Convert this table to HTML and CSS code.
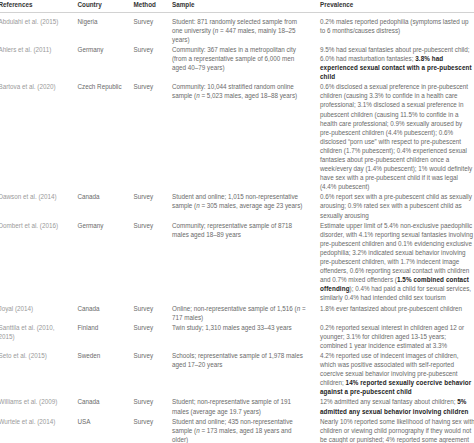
FILE: index.html
```html
<!DOCTYPE html>
<html lang="en">
<head>
<meta charset="utf-8">
<title>Prevalence table</title>
<link rel="stylesheet" href="styles.css">
</head>
<body>
<table class="data">
  <colgroup>
    <col class="c-ref"><col class="c-country"><col class="c-method"><col class="c-sample"><col class="c-prev">
  </colgroup>
  <thead>
    <tr><th>References</th><th>Country</th><th>Method</th><th>Sample</th><th>Prevalence</th></tr>
  </thead>
  <tbody>
    <tr>
      <td class="ref">Abdulahi et al. (2015)</td><td>Nigeria</td><td>Survey</td>
      <td>Student: 871 randomly selected sample from<br>one university (<i>n</i> = 447 males, mainly 18–25<br>years)</td>
      <td>0.2% males reported pedophilia (symptoms lasted up<br>to 6 months/causes distress)</td>
    </tr>
    <tr>
      <td class="ref">Ahlers et al. (2011)</td><td>Germany</td><td>Survey</td>
      <td>Community: 367 males in a metropolitan city<br>(from a representative sample of 6,000 men<br>aged 40–79 years)</td>
      <td>9.5% had sexual fantasies about pre-pubescent child;<br>6.0% had masturbation fantasies; <b>3.8% had</b><br><b>experienced sexual contact with a pre-pubescent</b><br><b>child</b></td>
    </tr>
    <tr>
      <td class="ref">Bartova et al. (2020)</td><td>Czech Republic</td><td>Survey</td>
      <td>Community: 10,044 stratified random online<br>sample (<i>n</i> = 5,023 males, aged 18–88 years)</td>
      <td>0.6% disclosed a sexual preference in pre-pubescent<br>children (causing 3.3% to confide in a health care<br>professional; 3.1% disclosed a sexual preference in<br>pubescent children (causing 11.5% to confide in a<br>health care professional; 0.9% sexually aroused by<br>pre-pubescent children (4.4% pubescent); 0.6%<br>disclosed “porn use” with respect to pre-pubescent<br>children (1.7% pubescent); 0.4% experienced sexual<br>fantasies about pre-pubescent children once a<br>week/every day (1.4% pubescent); 1% would definitely<br>have sex with a pre-pubescent child if it was legal<br>(4.4% pubescent)</td>
    </tr>
    <tr>
      <td class="ref">Dawson et al. (2014)</td><td>Canada</td><td>Survey</td>
      <td>Student and online; 1,015 non-representative<br>sample (<i>n</i> = 305 males, average age 23 years)</td>
      <td>0.6% report sex with a pre-pubescent child as sexually<br>arousing; 0.9% rated sex with a pubescent child as<br>sexually arousing</td>
    </tr>
    <tr>
      <td class="ref">Dombert et al. (2016)</td><td>Germany</td><td>Survey</td>
      <td>Community; representative sample of 8718<br>males aged 18–89 years</td>
      <td>Estimate upper limit of 5.4% non-exclusive paedophilic<br>disorder, with 4.1% reporting sexual fantasies involving<br>pre-pubescent children and 0.1% evidencing exclusive<br>pedophilia; 3.2% indicated sexual behavior involving<br>pre-pubescent children, with 1.7% indecent image<br>offenders, 0.6% reporting sexual contact with children<br>and 0.7% mixed offenders (<b>1.5% combined contact</b><br><b>offending</b>); 0.4% had paid a child for sexual services,<br>similarly 0.4% had intended child sex tourism</td>
    </tr>
    <tr>
      <td class="ref">Joyal (2014)</td><td>Canada</td><td>Survey</td>
      <td>Online; non-representative sample of 1,516 (<i>n</i> =<br>717 males)</td>
      <td>1.8% ever fantasized about pre-pubescent children</td>
    </tr>
    <tr>
      <td class="ref">Santtila et al. (2010,<br>2015)</td><td>Finland</td><td>Survey</td>
      <td>Twin study; 1,310 males aged 33–43 years</td>
      <td>0.2% reported sexual interest in children aged 12 or<br>younger; 3.1% for children aged 13-15 years;<br>combined 1 year incidence estimated at 3.3%</td>
    </tr>
    <tr>
      <td class="ref">Seto et al. (2015)</td><td>Sweden</td><td>Survey</td>
      <td>Schools; representative sample of 1,978 males<br>aged 17–20 years</td>
      <td>4.2% reported use of indecent images of children,<br>which was positive associated with self-reported<br>coercive sexual behavior involving pre-pubescent<br>children; <b>14% reported sexually coercive behavior</b><br><b>against a pre-pubescent child</b></td>
    </tr>
    <tr>
      <td class="ref">Williams et al. (2009)</td><td>Canada</td><td>Survey</td>
      <td>Student; non-representative sample of 191<br>males (average age 19.7 years)</td>
      <td>12% admitted any sexual fantasy about children; <b>5%</b><br><b>admitted any sexual behavior involving children</b></td>
    </tr>
    <tr>
      <td class="ref">Wurtele et al. (2014)</td><td>USA</td><td>Survey</td>
      <td>Student and online; 435 non-representative<br>sample (<i>n</i> = 173 males, aged 18 years and<br>older)</td>
      <td>Nearly 10% reported some likelihood of having sex with<br>children or viewing child pornography if they would not<br>be caught or punished; 4% reported some agreement</td>
    </tr>
  </tbody>
</table>
</body>
</html>
```

FILE: styles.css
```css
html, body {
  margin: 0;
  padding: 0;
  background: #ffffff;
  overflow: hidden;
}

body {
  width: 474px;
  height: 443px;
  font-family: "Liberation Sans", Arial, sans-serif;
  font-size: 6.3px;
  line-height: 9.1px;
  color: #6a6a6a;
}

.data {
  border-collapse: collapse;
  table-layout: fixed;
  width: 500px;
  margin-left: -1.5px;
}

.c-ref { width: 79px; }
.c-country { width: 56px; }
.c-method { width: 38.5px; }
.c-sample { width: 148px; }
.c-prev { width: 178.5px; }

.data th {
  text-align: left;
  font-weight: bold;
  color: #333333;
  padding: 0 0 3px 0;
  border-bottom: 1px solid #d2d2d2;
  vertical-align: top;
}

.data td {
  padding: 1px 0 0 0;
  vertical-align: top;
  white-space: nowrap;
}

.data tbody tr:first-child td {
  padding-top: 3.5px;
}

.data td.ref {
  color: #9a9a9a;
}

.data b {
  color: #222222;
  font-weight: bold;
  letter-spacing: 0.1px;
}
```
